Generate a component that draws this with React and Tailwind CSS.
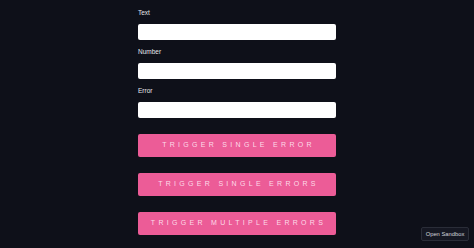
export default function App() {
  const fields = ["Text", "Number", "Error"];
  const buttons = ["Trigger single error", "Trigger single errors", "Trigger multiple errors"];
  return (
    <div
      className="relative w-[474px] h-[248px] bg-[#0e1019] overflow-hidden"
      style={{ fontFamily: '"Liberation Sans", Arial, sans-serif' }}
    >
      <div className="mx-auto w-[198px] pt-[8px] flex flex-col">
        {fields.map((f) => (
          <div key={f} className="flex flex-col mb-[7px]">
            <label className="text-[6.5px] leading-[10px] text-[#e5e7eb] mb-[6px]">{f}</label>
            <input className="h-[16px] w-full bg-white rounded-[2px] border-0 outline-none" />
          </div>
        ))}
        <div className="flex flex-col gap-[16px] mt-[9px]">
          {buttons.map((b) => (
            <button
              key={b}
              className="h-[23px] w-full bg-[#ec5c97] rounded-[2px] uppercase text-[7px] tracking-[3.3px] text-[#fcdbe8] flex items-center justify-center pl-[3px]"
            >
              {b}
            </button>
          ))}
        </div>
      </div>
      <div className="absolute left-[421px] top-[227px] w-[48px] h-[14px] rounded-[2px] border border-[#2a2d38] bg-[#151722] text-[5.8px] text-[#d1d5db] flex items-center justify-center">
        Open Sandbox
      </div>
    </div>
  );
}
